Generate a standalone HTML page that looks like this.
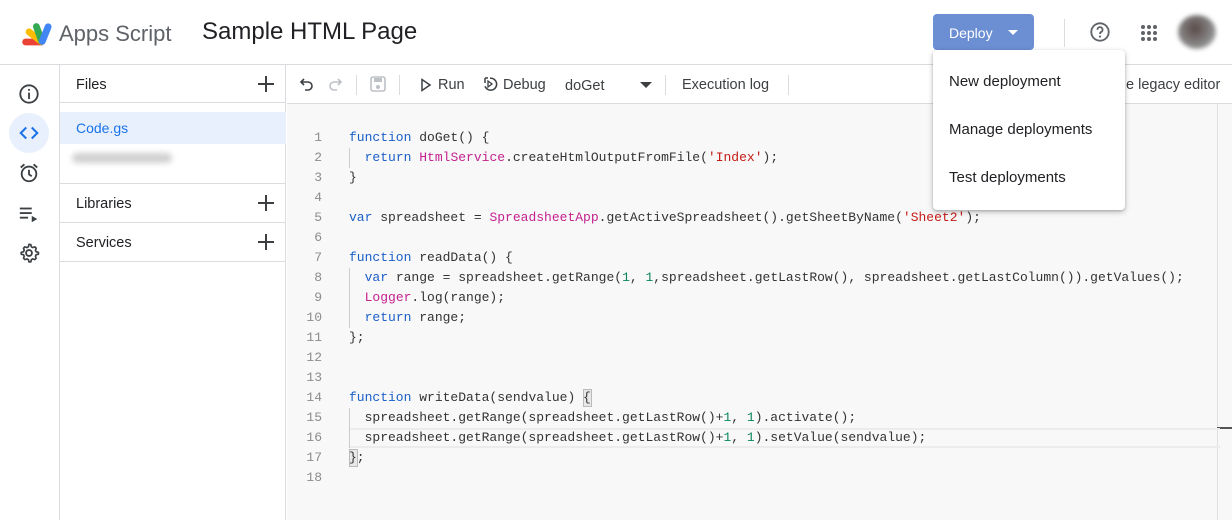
<!DOCTYPE html>
<html><head><meta charset="utf-8">
<style>
*{box-sizing:border-box;margin:0;padding:0}
body{width:1232px;height:520px;overflow:hidden;background:#fff;font-family:"Liberation Sans",Arial,sans-serif;color:#3c4043;position:relative}
.abs{position:absolute}
.hdr{left:0;top:0;width:1232px;height:65px;border-bottom:1px solid #dadce0}
.rail{left:0;top:65px;width:60px;height:455px;border-right:1px solid #dadce0}
.files{left:60px;top:65px;width:226px;height:455px;border-right:1px solid #dadce0}
.sec{position:absolute;left:0;width:226px;border-bottom:1px solid #dadce0;font-size:14.5px;color:#202124}
.plus{position:absolute;right:12px;top:50%;width:16px;height:16px;margin-top:-8px}
.plus:before,.plus:after{content:"";position:absolute;background:#3c4043}
.plus:before{left:7px;top:0;width:2px;height:16px}
.plus:after{left:0;top:7px;width:16px;height:2px}
.tb{left:287px;top:65px;width:945px;height:39px;border-bottom:1px solid #dadce0;font-size:14.5px;color:#3c4043}
.code{left:287px;top:104px;width:945px;height:416px;background:#f8f8f8}
.ln{position:absolute;left:0;width:35px;text-align:right;color:#8c8c8c;font:13px/20px "Liberation Mono",monospace}
.cl{position:absolute;left:62px;white-space:pre;color:#333;font:13px/20px "Liberation Mono",monospace}
.k{color:#1a5fc8}.c{color:#c4228f}.s{color:#c41a16}.n{color:#098658}
.menu{left:933px;top:50px;width:192px;height:160px;background:#fff;border-radius:4px;box-shadow:0 2px 6px rgba(0,0,0,.25),0 1px 2px rgba(0,0,0,.15)}
.mi{position:absolute;left:16px;font-size:15px;color:#202124}
.sep{position:absolute;top:10px;width:1px;height:20px;background:#dadce0}
</style></head><body>

<div class="abs hdr">
  <svg class="abs" style="left:18px;top:16px" width="34" height="32" viewBox="0 0 34 32">
    <g transform="translate(24 26) scale(0.9)">
      <rect x="-22" y="-3.8" width="25" height="7.6" rx="3.8" fill="#ea4335"/>
      <rect x="-22" y="-3.8" width="25" height="7.6" rx="3.8" fill="#fbbc04" transform="rotate(38)"/>
      <rect x="-22" y="-3.8" width="25" height="7.6" rx="3.8" fill="#34a853" transform="rotate(70)"/>
      <rect x="-22" y="-3.8" width="25" height="7.6" rx="3.8" fill="#4285f4" transform="rotate(112)"/>
    </g>
  </svg>
  <div class="abs" style="left:59px;top:21px;font-size:22px;color:#5f6368">Apps Script</div>
  <div class="abs" style="left:202px;top:18px;font-size:24px;color:#202124">Sample HTML Page</div>
  <div class="abs" style="left:933px;top:14px;width:101px;height:36px;background:#6c8fd3;border-radius:4px;color:#fff;font-size:14px">
    <span class="abs" style="left:16px;top:11px">Deploy</span>
    <span class="abs" style="left:75px;top:16px;width:0;height:0;border-left:5px solid transparent;border-right:5px solid transparent;border-top:5px solid #fff"></span>
  </div>
  <div class="abs" style="left:1064px;top:19px;width:1px;height:28px;background:#dadce0"></div>
  <svg class="abs" style="left:1089px;top:21px" width="22" height="22" viewBox="0 0 24 24"><circle cx="12" cy="12" r="9.5" fill="none" stroke="#5f6368" stroke-width="2"/><path d="M9.2 9.5a2.8 2.8 0 1 1 4 2.5c-1 .5-1.2 1.1-1.2 2.2" fill="none" stroke="#5f6368" stroke-width="2"/><circle cx="12" cy="17" r="1.2" fill="#5f6368"/></svg>
  <svg class="abs" style="left:1140px;top:24px" width="18" height="18" viewBox="0 0 18 18" fill="#5f6368"><circle cx="3" cy="3" r="2"/><circle cx="9" cy="3" r="2"/><circle cx="15" cy="3" r="2"/><circle cx="3" cy="9" r="2"/><circle cx="9" cy="9" r="2"/><circle cx="15" cy="9" r="2"/><circle cx="3" cy="15" r="2"/><circle cx="9" cy="15" r="2"/><circle cx="15" cy="15" r="2"/></svg>
  <div class="abs" style="left:1178px;top:15px;width:38px;height:34px;border-radius:50%;background:radial-gradient(circle at 45% 40%,#5a4a48,#8a8a8a 60%,#e8e8e8 100%);filter:blur(2px)"></div>
</div>

<div class="abs rail">
  <svg class="abs" style="left:18px;top:18px" width="22" height="22" viewBox="0 0 24 24"><circle cx="12" cy="12" r="9.5" fill="none" stroke="#3c4043" stroke-width="2"/><rect x="11" y="10.5" width="2" height="7" fill="#3c4043"/><rect x="11" y="6.5" width="2" height="2" fill="#3c4043"/></svg>
  <div class="abs" style="left:9px;top:48px;width:40px;height:40px;border-radius:50%;background:#e8f0fe"></div>
  <svg class="abs" style="left:18px;top:57px" width="22" height="22" viewBox="0 0 24 24"><path d="M9 6l-6 6 6 6M15 6l6 6-6 6" fill="none" stroke="#1a73e8" stroke-width="2.2"/></svg>
  <svg class="abs" style="left:18px;top:97px" width="22" height="22" viewBox="0 0 24 24"><circle cx="12" cy="13" r="8" fill="none" stroke="#3c4043" stroke-width="2"/><path d="M12 8.5v5l3 2M3 6l4-3.5M21 6l-4-3.5" fill="none" stroke="#3c4043" stroke-width="2"/></svg>
  <svg class="abs" style="left:18px;top:138px" width="22" height="22" viewBox="0 0 24 24" fill="#3c4043"><rect x="2" y="5" width="13" height="2"/><rect x="2" y="10" width="13" height="2"/><rect x="2" y="15" width="9" height="2"/><path d="M15 14l6 3.5-6 3.5z"/></svg>
  <svg class="abs" style="left:18px;top:177px" width="22" height="22" viewBox="0 0 24 24"><path d="M12 2.5l2 .3.5 2.4 1.6.9 2.3-.8 1.4 1.5-.8 2.3.9 1.6 2.4.5v2.1l-2.4.5-.9 1.6.8 2.3-1.4 1.5-2.3-.8-1.6.9-.5 2.4h-2.1l-.5-2.4-1.6-.9-2.3.8-1.5-1.5.8-2.3-.9-1.6-2.4-.5v-2.1l2.4-.5.9-1.6-.8-2.3 1.5-1.5 2.3.8 1.6-.9.5-2.4z" fill="none" stroke="#3c4043" stroke-width="1.8" stroke-linejoin="round"/><circle cx="12" cy="12" r="3.2" fill="none" stroke="#3c4043" stroke-width="2"/></svg>
</div>

<div class="abs files">
  <div class="sec" style="top:0;height:38px"><span class="abs" style="left:16px;top:12px">Files</span><span class="plus"></span></div>
  <div class="abs" style="left:0;top:47px;width:226px;height:32px;background:#e8f0fe"><span class="abs" style="left:16px;top:8px;font-size:14px;color:#1a73e8">Code.gs</span></div>
  <div class="abs" style="left:12px;top:88px;width:100px;height:10px;border-radius:5px;background:#d0d0d0;filter:blur(3px)"></div>
  <div class="abs" style="left:0;top:118px;width:226px;height:1px;background:#dadce0"></div>
  <div class="sec" style="top:119px;height:39px"><span class="abs" style="left:16px;top:12px">Libraries</span><span class="plus"></span></div>
  <div class="sec" style="top:158px;height:39px"><span class="abs" style="left:16px;top:12px">Services</span><span class="plus"></span></div>
</div>

<div class="abs tb">
  <svg class="abs" style="left:12px;top:11px" width="16" height="16" viewBox="0 0 16 16"><path d="M5 3L2 6l3 3M2 6h7a4 4 0 0 1 0 8H6" fill="none" stroke="#3c4043" stroke-width="1.6"/></svg>
  <svg class="abs" style="left:40px;top:11px" width="16" height="16" viewBox="0 0 16 16"><path d="M11 3l3 3-3 3M14 6H7a4 4 0 0 0 0 8h3" fill="none" stroke="#bdc1c6" stroke-width="1.6"/></svg>
  <div class="sep" style="left:69px"></div>
  <svg class="abs" style="left:82px;top:10px" width="18" height="18" viewBox="0 0 18 18"><rect x="2" y="2" width="14" height="14" rx="2" fill="none" stroke="#bdc1c6" stroke-width="1.6"/><rect x="5" y="3" width="8" height="4" fill="#bdc1c6"/><circle cx="9" cy="12" r="2" fill="#bdc1c6"/></svg>
  <div class="sep" style="left:112px"></div>
  <svg class="abs" style="left:133px;top:13px" width="12" height="14" viewBox="0 0 12 14"><path d="M2 1.5l8 5.5-8 5.5z" fill="none" stroke="#3c4043" stroke-width="1.5"/></svg>
  <span class="abs" style="left:151px;top:12px">Run</span>
  <svg class="abs" style="left:195px;top:11px" width="16" height="16" viewBox="0 0 16 16"><path d="M3 2v5M3 2h3M8 2.2a6 6 0 1 1-5 8" fill="none" stroke="#3c4043" stroke-width="1.5"/><path d="M6 5l4 3-4 3z" fill="none" stroke="#3c4043" stroke-width="1.3"/></svg>
  <span class="abs" style="left:216px;top:12px">Debug</span>
  <span class="abs" style="left:278px;top:13px">doGet</span>
  <span class="abs" style="left:353px;top:17px;border-left:6px solid transparent;border-right:6px solid transparent;border-top:6px solid #3c4043"></span>
  <div class="sep" style="left:378px"></div>
  <span class="abs" style="left:395px;top:12px">Execution log</span>
  <div class="sep" style="left:501px"></div>
  <span class="abs" style="left:839px;top:12px">e legacy editor</span>
</div>

<div class="abs code">
  <div class="abs" style="left:930px;top:0;width:1px;height:416px;background:#e0e0e0"></div>
  <div class="abs" style="left:930px;top:323px;width:15px;height:2px;background:#555"></div>
  <div class="abs" style="left:62px;top:324px;width:871px;height:20px;border-top:2px solid #ececec;border-bottom:2px solid #ececec"></div>
  <div class="abs" style="left:62px;top:44px;width:1px;height:20px;background:#ccc"></div>
  <div class="abs" style="left:62px;top:164px;width:1px;height:60px;background:#ccc"></div>
  <div class="abs" style="left:62px;top:304px;width:1px;height:40px;background:#ccc"></div>
  <div class="abs" style="left:296px;top:285px;width:9px;height:18px;border:1px solid #bbb;background:#e8e8e8"></div>
  <div class="abs" style="left:62px;top:345px;width:9px;height:18px;border:1px solid #bbb;background:#e8e8e8"></div>
  <div class="ln" style="top:24px">1<br>2<br>3<br>4<br>5<br>6<br>7<br>8<br>9<br>10<br>11<br>12<br>13<br>14<br>15<br>16<br>17<br>18</div>
  <div class="cl" style="top:24px"><span class="k">function</span> doGet() {
  <span class="k">return</span> <span class="c">HtmlService</span>.createHtmlOutputFromFile(<span class="s">'Index'</span>);
}

<span class="k">var</span> spreadsheet = <span class="c">SpreadsheetApp</span>.getActiveSpreadsheet().getSheetByName(<span class="s">'Sheet2'</span>);

<span class="k">function</span> readData() {
  <span class="k">var</span> range = spreadsheet.getRange(<span class="n">1</span>, <span class="n">1</span>,spreadsheet.getLastRow(), spreadsheet.getLastColumn()).getValues();
  <span class="c">Logger</span>.log(range);
  <span class="k">return</span> range;
};


<span class="k">function</span> writeData(sendvalue) {
  spreadsheet.getRange(spreadsheet.getLastRow()+<span class="n">1</span>, <span class="n">1</span>).activate();
  spreadsheet.getRange(spreadsheet.getLastRow()+<span class="n">1</span>, <span class="n">1</span>).setValue(sendvalue);
};
</div>
</div>

<div class="abs menu">
  <span class="mi" style="top:23px">New deployment</span>
  <span class="mi" style="top:71px">Manage deployments</span>
  <span class="mi" style="top:119px">Test deployments</span>
</div>
</body></html>
